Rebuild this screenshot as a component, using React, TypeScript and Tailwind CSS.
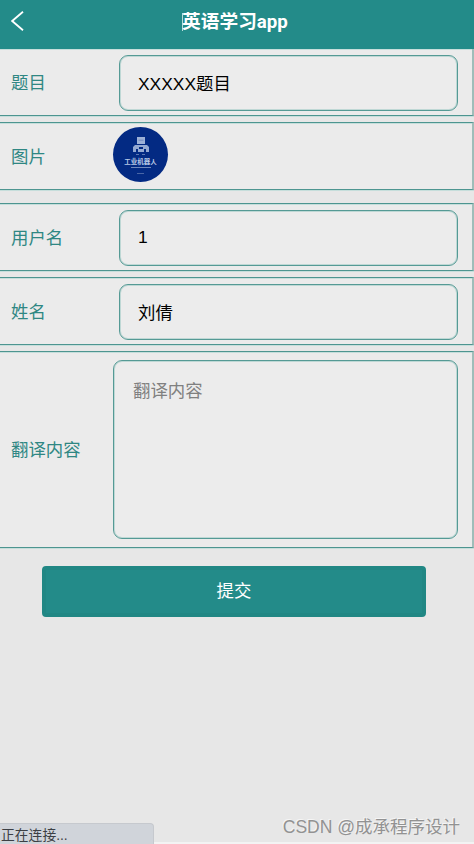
import React, { useState } from "react";

interface FormRowProps {
  label: string;
  className?: string;
  children: React.ReactNode;
}

const FormRow: React.FC<FormRowProps> = ({ label, className = "h-[68px]", children }) => (
  <div
    className={`flex shrink-0 items-center border-y border-r-2 border-y-[#4d9590] border-r-[#9fbdb9] bg-[#ebebeb] pl-[11px] pr-[14px] shadow-[inset_0_1px_0_#c6dedb,0_1px_0_#c6dedb] ${className}`}
  >
    <label className="w-[102px] shrink-0 whitespace-nowrap pt-[2px] text-[17.4px] text-[#2f8783]">{label}</label>
    {children}
  </div>
);

const inputClass =
  "ml-[6px] mt-px h-14 min-w-0 flex-1 rounded-[9px] border border-[#559a95] bg-[#ececec] px-[18px] text-[17.4px] text-black shadow-[inset_0_0_0_1px_#bfd8d5] outline-none";

const RobotAvatar = () => (
  <div className="flex size-[55px] flex-col items-center rounded-full bg-[#032a83] pt-[10px] text-[#b9c9e6]">
    <svg width="18" height="20" viewBox="0 0 18 20" fill="currentColor">
      <path d="M5 0h8v7H5z" opacity=".85" />
      <path d="M6.5 2.5h5V4h-5z" fill="#7f96c6" />
      <path d="M3 8h12l2 2v5h-3v-3h-2v3H6v-3H4v3H1v-5z" opacity=".8" />
      <path d="M7 10h4v2H7z" fill="#032a83" />
      <path d="M4 17h3v1H4zM10 17h3v1h-3z" opacity=".5" />
    </svg>
    <span className="mt-px whitespace-nowrap text-[6.5px] font-bold leading-[8px]">工业机器人</span>
    <span className="mt-px h-px w-5 bg-[#6f88bd]" />
    <span className="mt-[5px] h-px w-[7px] bg-[#4966a6]" />
  </div>
);

export default function App() {
  const [title, setTitle] = useState("XXXXX题目");
  const [username, setUsername] = useState("1");
  const [name, setName] = useState("刘倩");
  const [content, setContent] = useState("");

  return (
    <div className="flex h-[844px] w-[474px] flex-col overflow-hidden bg-[#e7e7e7] font-['Liberation_Sans','Noto_Sans_CJK_SC',sans-serif]">
      {/* Header */}
      <header className="grid h-[49px] shrink-0 grid-cols-[40px_1fr_40px] items-center bg-[#238b89] text-white">
        <button aria-label="返回" className="pb-[7px] pl-[11px]">
          <svg width="13" height="20" viewBox="0 0 13 20" fill="none" stroke="currentColor" strokeWidth="1.8">
            <path d="M12 .8 1.2 10 12 19.2" />
          </svg>
        </button>
        <h1 className="flex items-center justify-center pb-[4px] pr-[4px] font-['Roboto','Noto_Sans_CJK_SC',sans-serif] text-[18.7px] font-bold leading-none">
          <span className="mr-[-1px] h-[18px] w-px bg-[#b9dddb]" />
          英语学习app
        </h1>
      </header>

      {/* Form */}
      <form className="flex flex-col" onSubmit={(e) => e.preventDefault()}>
        <FormRow label="题目" className="h-[67px] border-t-0">
          <input className={inputClass} value={title} onChange={(e) => setTitle(e.target.value)} />
        </FormRow>
        <FormRow label="图片" className="mt-[6px] h-[68px]">
          <div className="mb-1">
            <RobotAvatar />
          </div>
        </FormRow>
        <FormRow label="用户名" className="mt-[13px] h-[68px]">
          <input className={inputClass} value={username} onChange={(e) => setUsername(e.target.value)} />
        </FormRow>
        <FormRow label="姓名" className="mt-[6px] h-[68px]">
          <input className={inputClass} value={name} onChange={(e) => setName(e.target.value)} />
        </FormRow>
        <FormRow label="翻译内容" className="mt-[6px] h-[197px]">
          <textarea
            className="h-[179px] min-w-0 flex-1 resize-none rounded-[9px] border border-[#559a95] bg-[#ececec] px-[19px] py-[17px] text-[17.4px] text-black shadow-[inset_0_0_0_1px_#bfd8d5] outline-none placeholder:text-[#808080]"
            placeholder="翻译内容"
            value={content}
            onChange={(e) => setContent(e.target.value)}
          />
        </FormRow>

        <button
          type="submit"
          className="ml-[42px] mt-[18px] h-[51px] w-[384px] rounded-[4px] border-4 border-[#218784] bg-[#238b89] text-[17.4px] text-white"
        >
          提交
        </button>
      </form>

      {/* Browser status and watermark */}
      <footer className="mt-auto flex items-end justify-between shadow-[inset_0_-2px_0_#f3f3f3]">
        <div className="flex h-[21px] w-[154px] items-end rounded-tr-[4px] border-r border-t border-[#c6c9ce] bg-[#d0d4da] pl-px text-[13.8px] leading-[16px] text-[#3c3f44]">
          正在连接...
        </div>
        <div className="mb-[2px] mr-[14px] whitespace-nowrap text-[17.5px] leading-[30px] text-[#929292] [text-shadow:-1px_-1px_0_#f5f5f5]">
          CSDN @成承程序设计
        </div>
      </footer>
    </div>
  );
}
